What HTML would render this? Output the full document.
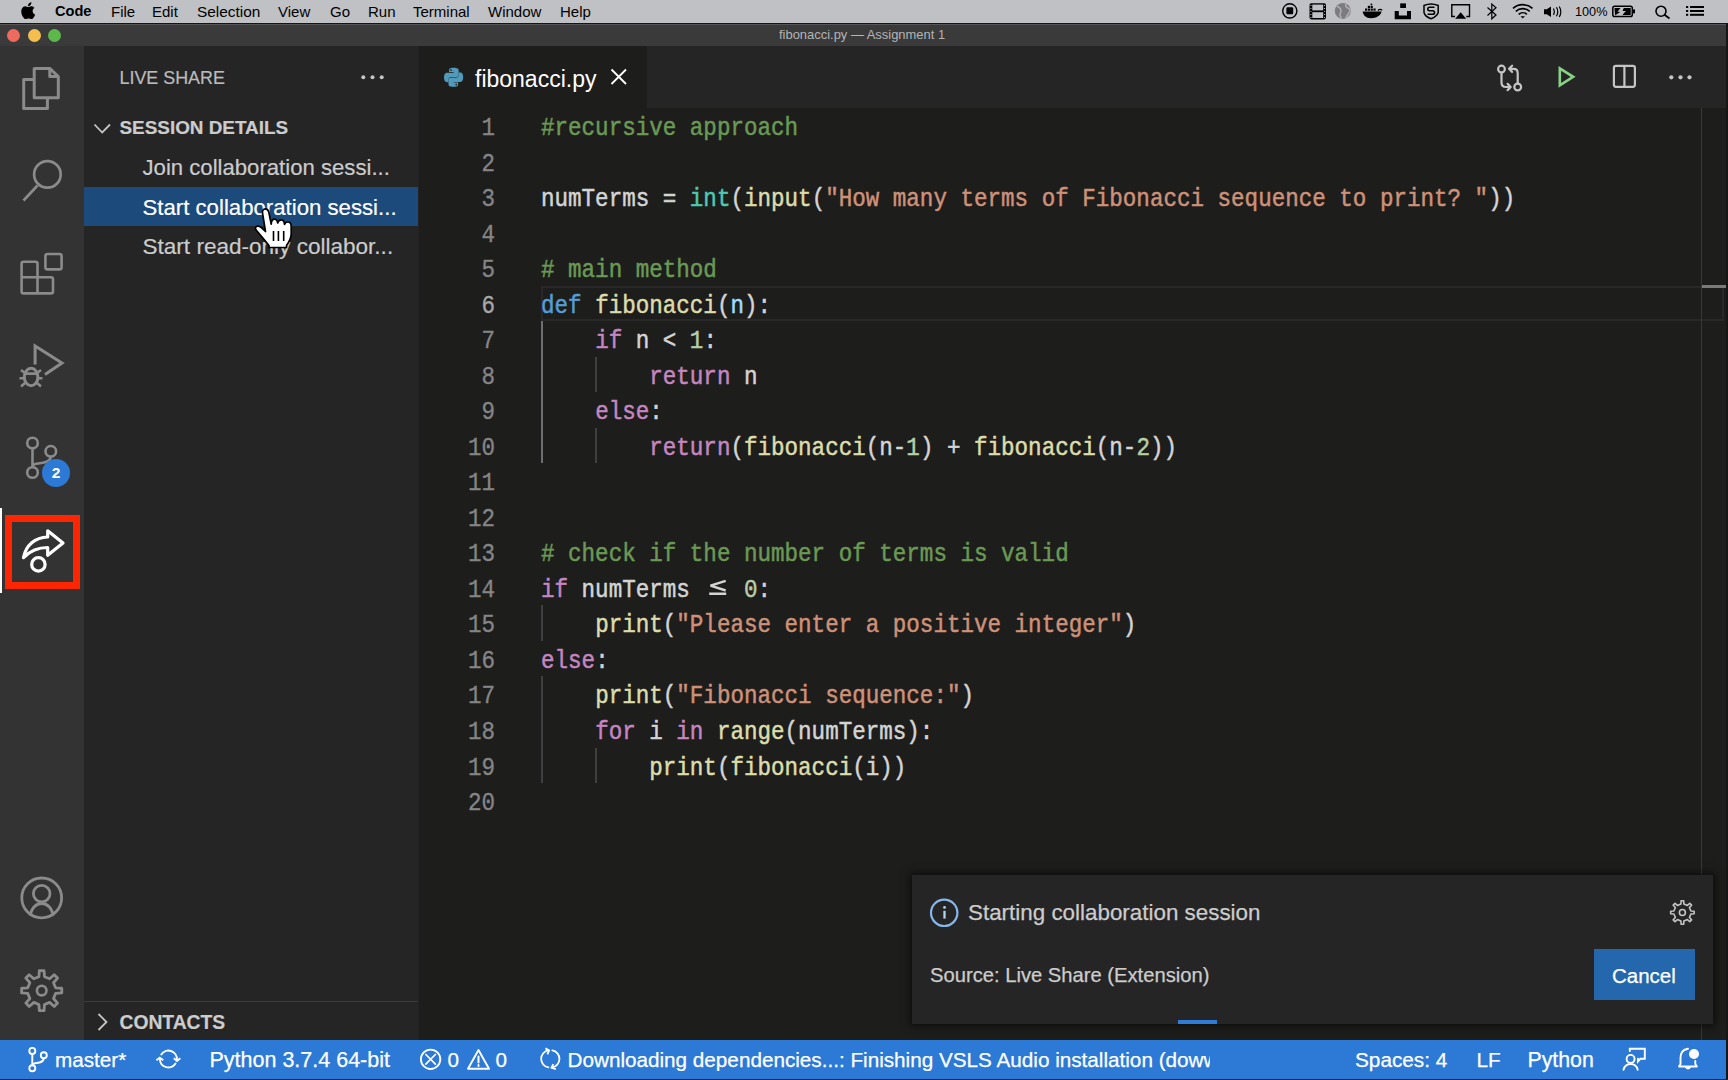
<!DOCTYPE html>
<html><head><meta charset="utf-8">
<style>
*{margin:0;padding:0;box-sizing:border-box}
html,body{width:1728px;height:1080px;overflow:hidden;background:#1d1d1c;font-family:"Liberation Sans",sans-serif}
.a{position:absolute;white-space:nowrap;line-height:1}
svg{position:absolute;overflow:visible}
#menubar{position:absolute;left:0;top:0;width:1728px;height:23px;background:#bfc1c5}
#menubar .a{font-size:15px;color:#000;top:3.8px}
#titlebar{position:absolute;left:0;top:23px;width:1728px;height:23px;background:#3a3a3a;border-top:1px solid #151515;box-shadow:inset 0 1px 0 #565656}
#activity{position:absolute;left:0;top:46px;width:84px;height:994px;background:#333333}
#sidebar .a{-webkit-text-stroke:0.2px currentColor}
#notif .a{-webkit-text-stroke:0.25px currentColor}
#sidebar{position:absolute;left:84px;top:46px;width:334px;height:994px;background:#252526}
#tabs{position:absolute;left:418px;top:46px;width:1310px;height:62px;background:#252526}
#editor{position:absolute;left:418px;top:108px;width:1310px;height:932px;background:#1d1d1c;overflow:hidden}
#status{position:absolute;left:0;top:1040px;width:1728px;height:40px;background:#2c7ad5}
#status .a{font-size:20.7px;color:#fff;top:10px;-webkit-text-stroke:0.25px #fff}
.code .l{position:absolute;left:123px;height:35.53px;line-height:35.53px;font-family:"Liberation Mono",monospace;font-size:22.55px;color:#d4d4d4;white-space:pre;-webkit-text-stroke:0.45px currentColor;transform:scaleY(1.12);transform-origin:0 23.8px}
.code .n{position:absolute;left:0;width:77px;text-align:right;height:35.53px;line-height:35.53px;font-family:"Liberation Mono",monospace;font-size:22.55px;color:#858585;white-space:pre;-webkit-text-stroke:0.3px currentColor;transform:scaleY(1.12);transform-origin:0 23.8px}
.c{color:#6a9955}.k{color:#569cd6}.p{color:#c586c0}.f{color:#dcdcaa}.t{color:#4ec9b0}.s{color:#ce9178}.d{color:#b5cea8}.v{color:#9cdcfe}
.le{display:inline-block;width:27.06px;text-align:center}
.g{position:absolute;width:2px;background:#404040}
</style></head><body>
<div id="menubar">
<svg style="left:21px;top:2px" width="15" height="17" viewBox="0 0 15 17"><path d="M11.6 9.0c0-2 1.7-3 1.8-3.1-1-1.4-2.5-1.6-3-1.6-1.3-.1-2.5.8-3.1.8-.7 0-1.7-.8-2.8-.8C3.1 4.3 1.8 5.1 1 6.400c-1.5 2.600-.4 6.500 1.100 8.600.7 1 1.600 2.200 2.700 2.100 1.100 0 1.500-.7 2.800-.7s1.700.7 2.800.7c1.200 0 1.900-1 2.600-2.100.8-1.200 1.200-2.300 1.200-2.400-.1 0-2.600-1-2.600-3.600zM9.500 3.000c.6-.7 1-1.700.9-2.700-.9 0-1.900.6-2.500 1.300-.6.600-1.100 1.600-.9 2.600 1 .1 1.900-.5 2.500-1.200z" fill="#000"/></svg>
<div class="a" style="left:55px;font-weight:bold;font-size:14.6px">Code</div>
<div class="a" style="left:111px">File</div>
<div class="a" style="left:152px">Edit</div>
<div class="a" style="left:197px;font-size:15.4px">Selection</div>
<div class="a" style="left:278px">View</div>
<div class="a" style="left:330px">Go</div>
<div class="a" style="left:368px">Run</div>
<div class="a" style="left:413px">Terminal</div>
<div class="a" style="left:488px">Window</div>
<div class="a" style="left:560px">Help</div>
<svg style="left:0;top:0" width="1728" height="23" viewBox="0 0 1728 23">
<circle cx="1289.8" cy="10.9" r="7.1" fill="none" stroke="#000" stroke-width="1.4"/>
<rect x="1286.4" y="7.3" width="6.8" height="7" rx="1.2" fill="#000"/>
<rect x="1309.5" y="3.2" width="16.5" height="16.2" rx="1.8" fill="#000"/>
<rect x="1312.3" y="4.6" width="10.9" height="5.8" fill="#bfc1c5"/>
<rect x="1312.3" y="12.2" width="10.9" height="5.8" fill="#bfc1c5"/>
<g fill="#bfc1c5"><rect x="1310.4" y="5" width="1" height="1"/><rect x="1310.4" y="8" width="1" height="1"/><rect x="1310.4" y="11" width="1" height="1"/><rect x="1310.4" y="14" width="1" height="1"/><rect x="1310.4" y="17" width="1" height="1"/>
<rect x="1324.1" y="5" width="1" height="1"/><rect x="1324.1" y="8" width="1" height="1"/><rect x="1324.1" y="11" width="1" height="1"/><rect x="1324.1" y="14" width="1" height="1"/><rect x="1324.1" y="17" width="1" height="1"/></g>
<circle cx="1342.8" cy="10.9" r="8" fill="#7c7c80"/>
<path d="M1337 6C1339 7.5 1340.5 8 1341 10S1339.5 13 1340 15.5L1341.5 18.5M1346 4C1345 6 1346.5 7.5 1348 8S1350.5 10 1349.5 12C1348.5 14 1347 15 1346 18" stroke="#b0b0b4" stroke-width="1.6" fill="none"/>
<path d="M1362.7 11.5H1381.5C1381 15.5 1376 18.2 1371 18.2C1366 18.2 1363 15 1362.7 11.5Z" fill="#000"/>
<g fill="#000"><rect x="1365" y="8.5" width="2.2" height="2.2"/><rect x="1367.8" y="8.5" width="2.2" height="2.2"/><rect x="1370.6" y="8.5" width="2.2" height="2.2"/><rect x="1373.4" y="8.5" width="2.2" height="2.2"/><rect x="1367.8" y="5.8" width="2.2" height="2.2"/><rect x="1370.6" y="5.8" width="2.2" height="2.2"/><rect x="1370.6" y="3.6" width="1.6" height="1.6"/></g>
<path d="M1378 10.5Q1380 8.5 1382.2 10.2" stroke="#000" stroke-width="1.2" fill="none"/>
<rect x="1400.2" y="3.4" width="5.8" height="4.6" fill="#000"/>
<path d="M1394.7 11H1398.8V15.6H1407V11H1411V19.2H1394.7Z" fill="#000"/>
<path d="M1424 5.5Q1431 2.5 1438.2 5.5V12.5Q1437 16.5 1431 18.8Q1425 16.5 1424 12.5Z" fill="none" stroke="#000" stroke-width="1.5"/>
<path d="M1434.5 7.3H1429.5Q1427.8 7.3 1427.8 9Q1427.8 10.7 1429.5 10.7H1432.8Q1434.5 10.7 1434.5 12.4Q1434.5 14.2 1432.8 14.2H1427.6" fill="none" stroke="#000" stroke-width="1.6"/>
<path d="M1455 16.5H1451.8V4.8H1469.5V16.5H1466.3" fill="none" stroke="#000" stroke-width="1.4"/>
<path d="M1460.7 12.3L1466.2 18.8H1455.2Z" fill="#000"/>
<path d="M1487.5 7.5L1496 15L1491.8 18.8V4L1496 7.8L1487.5 15.5" fill="none" stroke="#000" stroke-width="1.2"/>
<path d="M1513 8.3A15 15 0 0 1 1532.5 8.3M1515.8 11.3A10.5 10.5 0 0 1 1529.7 11.3M1518.7 14.3A6 6 0 0 1 1526.8 14.3" fill="none" stroke="#000" stroke-width="1.7"/>
<path d="M1520.5 16.2L1522.7 18.6L1525 16.2Z" fill="#000"/>
<path d="M1544 9.2H1546.8L1551 6.5V16.9L1546.8 14.2H1544Z" fill="#000"/>
<path d="M1553.5 8.5Q1555.2 11.7 1553.5 14.9M1556.5 7.2Q1559 11.7 1556.5 16.2M1559.3 6.5Q1562.3 11.7 1559.3 17" fill="none" stroke="#000" stroke-width="1.2"/>
<rect x="1612.8" y="6.3" width="19.5" height="10.2" rx="1.8" fill="none" stroke="#000" stroke-width="1.5"/>
<rect x="1633" y="9.2" width="2" height="4.4" rx="0.8" fill="#000"/>
<path d="M1614.5 8H1620.5L1617.5 11.8H1621L1615 15.2Z M1623.5 8H1630.7V15H1622.5L1625.5 11H1622Z" fill="#000"/>
<path d="M1624 7.3L1618.5 12.2H1622L1619.5 16.5L1626 11H1622.5Z" fill="#bfc1c5"/>
<circle cx="1661" cy="11.2" r="5" fill="none" stroke="#000" stroke-width="1.6"/>
<path d="M1664.5 14.7L1669.5 18.5" stroke="#000" stroke-width="1.8"/>
<g fill="#000"><rect x="1686" y="6" width="2.2" height="2"/><rect x="1686" y="10" width="2.2" height="2"/><rect x="1686" y="13.8" width="2.2" height="2"/>
<rect x="1690" y="6" width="14" height="2"/><rect x="1690" y="10" width="14" height="2"/><rect x="1690" y="13.8" width="14" height="2"/></g>
</svg>
<div class="a" style="left:1575px;top:5.5px;font-size:12.7px">100%</div>
</div>
<div id="titlebar">
<div class="a" style="left:7px;top:4.8px;width:13px;height:13px;border-radius:50%;background:#ec6a5e"></div>
<div class="a" style="left:27.5px;top:4.8px;width:13px;height:13px;border-radius:50%;background:#f4bf4f"></div>
<div class="a" style="left:48px;top:4.8px;width:13px;height:13px;border-radius:50%;background:#5cb84a"></div>
<div class="a" style="left:779px;top:5px;font-size:12.95px;color:#b4b4b4">fibonacci.py — Assignment 1</div>
</div>
<div id="activity">
<svg style="left:0;top:0" width="84" height="994" viewBox="0 46 84 994" fill="none" stroke="#8b8b8b" stroke-width="3" stroke-linejoin="round">
<!-- explorer -->
<path d="M34.2 22.5H50L58.3 30.6V51.7H34.2Z M49.8 22.5V30.5H58.3" transform="translate(0,46)"/>
<path d="M34.2 33.5H23.7V62.6H47.4V51.7" transform="translate(0,46)"/>
<!-- search -->
<g stroke-width="2.7"><circle cx="47.4" cy="174.4" r="13.3"/>
<path d="M37.5 185.5L23.5 200.5"/></g>
<!-- extensions -->
<g stroke-width="2.6"><path d="M23.6 261.7H35.5Q37.5 261.7 37.5 263.7V293.4H23.6Q21.6 293.4 21.6 291.4V263.7Q21.6 261.7 23.6 261.7Z M21.6 277.3H51Q53 277.3 53 279.3V291.4Q53 293.4 51 293.4H37.5"/>
<rect x="45.4" y="254" width="16.2" height="15.4" rx="2.2"/></g>
<!-- debug -->
<path d="M35.1 364.5V346L62 363L45 374.5" stroke-linejoin="miter"/>
<ellipse cx="31.1" cy="377" rx="6.8" ry="8.7"/>
<path d="M24.5 373.6H37.7 M19.5 378.2H24.5 M37.7 378.2H42.5 M21 370L25 373 M41 370L37 373 M21 386.5L25 383 M41 386.5L37 383" stroke-width="2.6"/>
<!-- scm -->
<g stroke-width="2.6"><circle cx="32.5" cy="443" r="5.3"/><circle cx="50.8" cy="451.3" r="5.3"/><circle cx="32.5" cy="472.5" r="5.3"/>
<path d="M32.5 448.3V467.2 M50.8 456.6C50.8 462 44 463 38 463.5C34 464 32.5 465 32.5 467"/></g>
<!-- accounts -->
<g stroke-width="2.8"><circle cx="41.7" cy="897.9" r="19.9"/><circle cx="41.7" cy="893.7" r="8.3"/><path d="M29.8 915.5C32 908 36 903.5 41.7 903.5S51.4 908 53.6 915.5"/></g>
<!-- gear -->
<path id="gearp" stroke-width="2.8" d="M38.93 976.67 L39.33 970.54 L44.07 970.54 L44.47 976.67 L49.59 978.79 L54.21 974.74 L57.56 978.09 L53.51 982.71 L55.63 987.83 L61.76 988.23 L61.76 992.97 L55.63 993.37 L53.51 998.49 L57.56 1003.11 L54.21 1006.46 L49.59 1002.41 L44.47 1004.53 L44.07 1010.66 L39.33 1010.66 L38.93 1004.53 L33.81 1002.41 L29.19 1006.46 L25.84 1003.11 L29.89 998.49 L27.77 993.37 L21.64 992.97 L21.64 988.23 L27.77 987.83 L29.89 982.71 L25.84 978.09 L29.19 974.74 L33.81 978.79Z"/>
<circle cx="41.7" cy="990.6" r="4.8" stroke-width="2.6"/>
</svg>
<div class="a" style="left:42px;top:412.9px;width:28px;height:28px;border-radius:50%;background:#2c7ad5;color:#fff;font-weight:bold;font-size:15.5px;line-height:28px;text-align:center">2</div>
<div class="a" style="left:0;top:462px;width:2px;height:85px;background:#fff"></div>
<div class="a" style="left:4.5px;top:468.5px;width:75px;height:74px;border:7.4px solid #fe2600"></div>
<svg style="left:0;top:0" width="84" height="994" viewBox="0 46 84 994" fill="none" stroke="#fff" stroke-width="3.2" stroke-linejoin="round" stroke-linecap="round">
<path d="M23.5 557.5C26 545 35 537.5 47.7 537V530.8L63 543L47.7 555.3V547.5C37 547.5 29 552 23.5 557.5Z"/>
<circle cx="38.4" cy="564.4" r="6.7"/>
</svg>
</div>
<div id="sidebar">
<div class="a" style="left:35.5px;top:24px;font-size:17.9px;color:#bbbbbb">LIVE SHARE</div>
<svg style="left:0;top:0" width="334" height="994" viewBox="84 46 334 994" fill="#c5c5c5">
<circle cx="363.3" cy="77.3" r="2"/><circle cx="372.5" cy="77.3" r="2"/><circle cx="381.7" cy="77.3" r="2"/>
<path d="M94.5 124.5L102.2 132.5L110 124.5" fill="none" stroke="#c5c5c5" stroke-width="1.8"/>
<path d="M98.5 1014L106.5 1022L98.5 1030" fill="none" stroke="#c5c5c5" stroke-width="1.8"/>
</svg>
<div class="a" style="left:35.5px;top:73px;font-size:18.9px;font-weight:bold;color:#cccccc">SESSION DETAILS</div>
<div class="a" style="left:58.5px;top:111px;font-size:22.15px;color:#cccccc">Join collaboration sessi...</div>
<div class="a" style="left:0;top:141px;width:334px;height:39px;background:#1b4a7b"></div>
<div class="a" style="left:58.5px;top:151px;font-size:22.2px;color:#ffffff">Start collaboration sessi...</div>
<div class="a" style="left:58.5px;top:190px;font-size:22.55px;color:#cccccc">Start read-only collabor...</div>
<div class="a" style="left:0;top:955px;width:334px;height:1px;background:#3c3c3c"></div>
<div class="a" style="left:35.5px;top:967px;font-size:19.3px;font-weight:bold;color:#cccccc">CONTACTS</div>
</div>
<div id="tabs">
<div class="a" style="left:0;top:0;width:229px;height:62px;background:#1d1d1c"></div>
<svg style="left:0;top:0" width="1310" height="62" viewBox="418 46 1310 62">
<g transform="translate(444,67.8) scale(0.8)">
<path fill="#519aba" d="M11.9 0C6 0 6.3 2.6 6.300 2.600V5.300H12V6.100H4.100S0 5.600 0 11.900 3.500 18 3.500 18H5.600V15.100S5.500 11.600 9.100 11.600H15S18.400 11.700 18.400 8.300V3C18.400 3 18.900 0 11.900 0ZM8.700 1.700A1.100 1.100 0 1 1 8.700 3.900 1.100 1.100 0 0 1 8.700 1.700Z"/>
<path fill="#519aba" d="M12.100 23.800C18 23.800 17.700 21.200 17.700 21.200V18.500H12V17.700H19.900S24 18.200 24 11.900 20.500 5.800 20.500 5.800H18.400V8.700S18.500 12.200 14.900 12.200H9S5.600 12.100 5.600 15.500V20.800S5.100 23.800 12.100 23.800ZM15.300 22.100A1.100 1.100 0 1 1 15.300 19.900 1.100 1.100 0 0 1 15.300 22.100Z"/>
</g>
<path d="M611.5 69.5L626 84M626 69.5L611.5 84" stroke="#ffffff" stroke-width="1.8" fill="none"/>
<g fill="none" stroke="#c5c5c5" stroke-width="2.2" stroke-linecap="round" stroke-linejoin="round">
<circle cx="1501.5" cy="69.1" r="3.4"/><circle cx="1517.7" cy="87" r="3.4"/>
<path d="M1501.5 72.7V82.5Q1501.5 87 1506 87H1510.5M1507.6 83.9L1510.7 87L1507.6 90.1"/>
<path d="M1517.7 83.4V73Q1517.7 68.8 1513.5 68.8H1509.2M1512.1 65.7L1509 68.8L1512.1 71.9"/>
<rect x="1613.9" y="65.8" width="21" height="21" rx="2"/>
<path d="M1624.4 66V86.5"/>
</g>
<path d="M1559.8 68.3V85.3L1573.2 76.8Z" fill="none" stroke="#89d185" stroke-width="2.6" stroke-linejoin="miter"/>
<g fill="#c5c5c5"><circle cx="1671.3" cy="77.3" r="2.1"/><circle cx="1680.5" cy="77.3" r="2.1"/><circle cx="1689.5" cy="77.3" r="2.1"/></g>
</svg>
<div class="a" style="left:57px;top:22px;font-size:23px;color:#ffffff">fibonacci.py</div>
</div>
<div id="editor" class="code">
<div class="a" style="left:123px;top:177.6px;width:1183px;height:35.53px;border:2px solid #282828"></div>
<div class="n" style="top:4.00px">1</div>
<div class="l" style="top:4.00px"><span class="c">#recursive approach</span></div>
<div class="n" style="top:39.53px">2</div>
<div class="n" style="top:75.06px">3</div>
<div class="l" style="top:75.06px">numTerms = <span class="t">int</span>(<span class="f">input</span>(<span class="s">"How many terms of Fibonacci sequence to print? "</span>))</div>
<div class="n" style="top:110.59px">4</div>
<div class="n" style="top:146.12px">5</div>
<div class="l" style="top:146.12px"><span class="c"># main method</span></div>
<div class="n" style="top:181.65px;color:#a8a8a8">6</div>
<div class="l" style="top:181.65px"><span class="k">def</span> <span class="f">fibonacci</span>(<span class="v">n</span>):</div>
<div class="n" style="top:217.18px">7</div>
<div class="l" style="top:217.18px">    <span class="p">if</span> n &lt; <span class="d">1</span>:</div>
<div class="n" style="top:252.71px">8</div>
<div class="l" style="top:252.71px">        <span class="p">return</span> n</div>
<div class="n" style="top:288.24px">9</div>
<div class="l" style="top:288.24px">    <span class="p">else</span>:</div>
<div class="n" style="top:323.77px">10</div>
<div class="l" style="top:323.77px">        <span class="p">return</span>(<span class="f">fibonacci</span>(n-<span class="d">1</span>) + <span class="f">fibonacci</span>(n-<span class="d">2</span>))</div>
<div class="n" style="top:359.30px">11</div>
<div class="n" style="top:394.83px">12</div>
<div class="n" style="top:430.36px">13</div>
<div class="l" style="top:430.36px"><span class="c"># check if the number of terms is valid</span></div>
<div class="n" style="top:465.89px">14</div>
<div class="l" style="top:465.89px"><span class="p">if</span> numTerms    <span class="d">0</span>:</div>
<div class="n" style="top:501.42px">15</div>
<div class="l" style="top:501.42px">    <span class="f">print</span>(<span class="s">"Please enter a positive integer"</span>)</div>
<div class="n" style="top:536.95px">16</div>
<div class="l" style="top:536.95px"><span class="p">else</span>:</div>
<div class="n" style="top:572.48px">17</div>
<div class="l" style="top:572.48px">    <span class="f">print</span>(<span class="s">"Fibonacci sequence:"</span>)</div>
<div class="n" style="top:608.01px">18</div>
<div class="l" style="top:608.01px">    <span class="p">for</span> i <span class="p">in</span> <span class="f">range</span>(numTerms):</div>
<div class="n" style="top:643.54px">19</div>
<div class="l" style="top:643.54px">        <span class="f">print</span>(<span class="f">fibonacci</span>(i))</div>
<div class="n" style="top:679.07px">20</div>
<div class="g" style="left:123px;top:213.18px;height:142.12px;background:#6e6e6e"></div>
<div class="g" style="left:177px;top:248.71px;height:35.53px"></div>
<div class="g" style="left:177px;top:319.77px;height:35.53px"></div>
<div class="g" style="left:123px;top:497.42px;height:35.53px"></div>
<div class="g" style="left:123px;top:568.48px;height:106.59px"></div>
<div class="g" style="left:177px;top:639.54px;height:35.53px"></div>
<svg style="left:0;top:0" width="1310" height="932" viewBox="418 108 1310 932"><path d="M725.7 580.8L710.5 585.7L725.7 590.5M709.2 593.8H726.2" fill="none" stroke="#d4d4d4" stroke-width="2.4" stroke-linejoin="bevel"/></svg>
<div class="a" style="left:1283px;top:0;width:1px;height:932px;background:#383838"></div>
<div class="a" style="left:1284px;top:177px;width:26px;height:3px;background:#7a7a7a"></div>
</div>
<div id="status">
<svg style="left:0;top:0" width="1728" height="40" viewBox="0 1040 1728 40" fill="none" stroke="#ffffff" stroke-width="1.9" stroke-linecap="round">
<circle cx="32.3" cy="1050.9" r="3"/><circle cx="32.3" cy="1068.2" r="3"/><circle cx="43.8" cy="1055.3" r="3"/>
<path d="M32.3 1053.9V1065.2M43.8 1058.3C43.8 1062 40 1062.5 36.5 1063C33.5 1063.5 32.3 1064.5 32.3 1065.2"/>
<path d="M161.3 1054.4A8.5 8.5 0 0 1 176.9 1059.5M175.5 1063.6A8.5 8.5 0 0 1 159.9 1059.2" stroke-width="1.9"/>
<path d="M173.8 1058.3L177 1061L180.3 1058.3M156.4 1060.3L159.8 1057.6L163.2 1060.3" stroke-width="1.9" stroke-linejoin="miter" stroke-linecap="butt"/>
<circle cx="430.6" cy="1059.3" r="9.7"/>
<path d="M425.8 1054.5L435.4 1064.1M435.4 1054.5L425.8 1064.1" stroke-width="1.7"/>
<path d="M478.5 1050L489 1068.8H468Z" stroke-linejoin="round"/>
<path d="M478.5 1056.5V1062.5M478.5 1065V1066" stroke-width="2"/>
<path d="M548.5 1050.4A8.6 8.6 0 0 0 548.4 1067.4M552.3 1050.4A8.6 8.6 0 0 1 552 1067.4" stroke-width="1.8"/>
<path d="M545.4 1048.4L549.1 1050.3L547.4 1054.3M553.3 1064.1L551.5 1067.7L555.8 1069.2" stroke-width="1.8" stroke-linejoin="miter" stroke-linecap="butt"/>
<circle cx="1630.6" cy="1058.9" r="4"/>
<path d="M1623.5 1069.8C1624.5 1066 1627 1064 1630.6 1064S1636.8 1066 1637.7 1069.8"/>
<path d="M1629.8 1051V1048.8H1644.8V1058.7H1640.5L1638 1061.5V1058.7" stroke-linejoin="miter"/>
<path d="M1688 1048.8C1683.5 1049.5 1680.5 1053 1680.5 1058V1064L1679 1066.5H1696.8L1695.3 1064V1061M1685.3 1066.5Q1688 1070.5 1690.7 1066.5" stroke-linejoin="round"/>
</svg>
<div class="a" style="left:1688.5px;top:8.5px;width:10px;height:10px;border-radius:50%;background:#fff"></div>
<div class="a" style="left:55px">master*</div>
<div class="a" style="left:209.5px;font-size:21.5px">Python 3.7.4 64-bit</div>
<div class="a" style="left:447.5px;font-size:20.7px">0</div>
<div class="a" style="left:495.5px;font-size:20.7px">0</div>
<div class="a" style="left:567.5px;font-size:20.7px;width:642.0px;overflow:hidden">Downloading dependencies...: Finishing VSLS Audio installation (dowwnload)</div>
<div class="a" style="left:1355px;font-size:20.75px">Spaces: 4</div>
<div class="a" style="left:1476.5px;font-size:20.7px">LF</div>
<div class="a" style="left:1527.5px;font-size:21.3px">Python</div>

</div>
<div id="notif" style="position:absolute;left:912px;top:875px;width:801px;height:149px;background:#252526;box-shadow:0 0 8px 2px rgba(0,0,0,0.6)">
<svg style="left:0;top:0" width="801" height="149" viewBox="912 875 801 149" fill="none">
<circle cx="944.2" cy="912.8" r="13.2" stroke="#86b6ea" stroke-width="2.2"/>
<path d="M944.5 910.8V918.6" stroke="#b5d2f2" stroke-width="2.3"/>
<circle cx="944.5" cy="907.4" r="1.4" fill="#b5d2f2"/>
<path id="gear2" d="M1680.92 904.03 L1681.11 900.77 L1683.69 900.77 L1683.88 904.03 L1687.35 905.46 L1689.78 903.29 L1691.61 905.12 L1689.44 907.55 L1690.87 911.02 L1694.13 911.21 L1694.13 913.79 L1690.87 913.98 L1689.44 917.45 L1691.61 919.88 L1689.78 921.71 L1687.35 919.54 L1683.88 920.97 L1683.69 924.23 L1681.11 924.23 L1680.92 920.97 L1677.45 919.54 L1675.02 921.71 L1673.19 919.88 L1675.36 917.45 L1673.93 913.98 L1670.67 913.79 L1670.67 911.21 L1673.93 911.02 L1675.36 907.55 L1673.19 905.12 L1675.02 903.29 L1677.45 905.46Z" stroke="#c5c5c5" stroke-width="1.6" stroke-linejoin="round"/>
<circle cx="1682.4" cy="912.5" r="3" stroke="#c5c5c5" stroke-width="1.6"/>
</svg>
<div class="a" style="left:56px;top:27px;font-size:22.4px;color:#cccccc">Starting collaboration session</div>
<div class="a" style="left:18px;top:90px;font-size:20.2px;color:#cccccc">Source: Live Share (Extension)</div>
<div class="a" style="left:682px;top:74px;width:101px;height:51px;background:#2467ac"></div>
<div class="a" style="left:700px;top:91px;font-size:20.5px;color:#ffffff">Cancel</div>
<div class="a" style="left:266px;top:145px;width:39px;height:4px;background:#2f7bd6"></div>
</div>
<svg style="left:0;top:0" width="1728" height="1080" viewBox="0 0 1728 1080">
<path d="M265.3 208.8C267.3 208.8 268.3 210 268.8 212L271.2 224.2C271.5 220.5 272.5 219.2 274.5 219.2C276.5 219.2 277.3 220.5 277.7 223C278.2 220.6 279.3 219.8 281.2 219.8C283.4 219.8 284.3 221.2 284.5 224.5C285 222.8 286.2 222 287.8 222C290 222 291.2 223.5 291.2 226.5V234C291.2 238 289 242 286.5 245.5V247.5H269V245.5C265 240.5 260 234.5 256.5 230.5C255 228.8 255.2 227 256.8 226.3C258.8 225.4 261 226.5 265.5 231.5L262.5 213C262.2 210.5 263.3 208.8 265.3 208.8Z" fill="#fff" stroke="#000" stroke-width="1.7" stroke-linejoin="round"/>
<path d="M273.5 231V241M278.4 231V241M283.7 231V241" stroke="#000" stroke-width="1.6"/>
</svg>
<div style="position:absolute;left:418px;top:46px;width:1px;height:994px;background:#232323"></div>
<div style="position:absolute;left:1726px;top:23px;width:2px;height:1057px;background:#161616"></div>
<div style="position:absolute;left:0;top:1078.5px;width:1728px;height:1.5px;background:#0b2b55"></div>
</body></html>
